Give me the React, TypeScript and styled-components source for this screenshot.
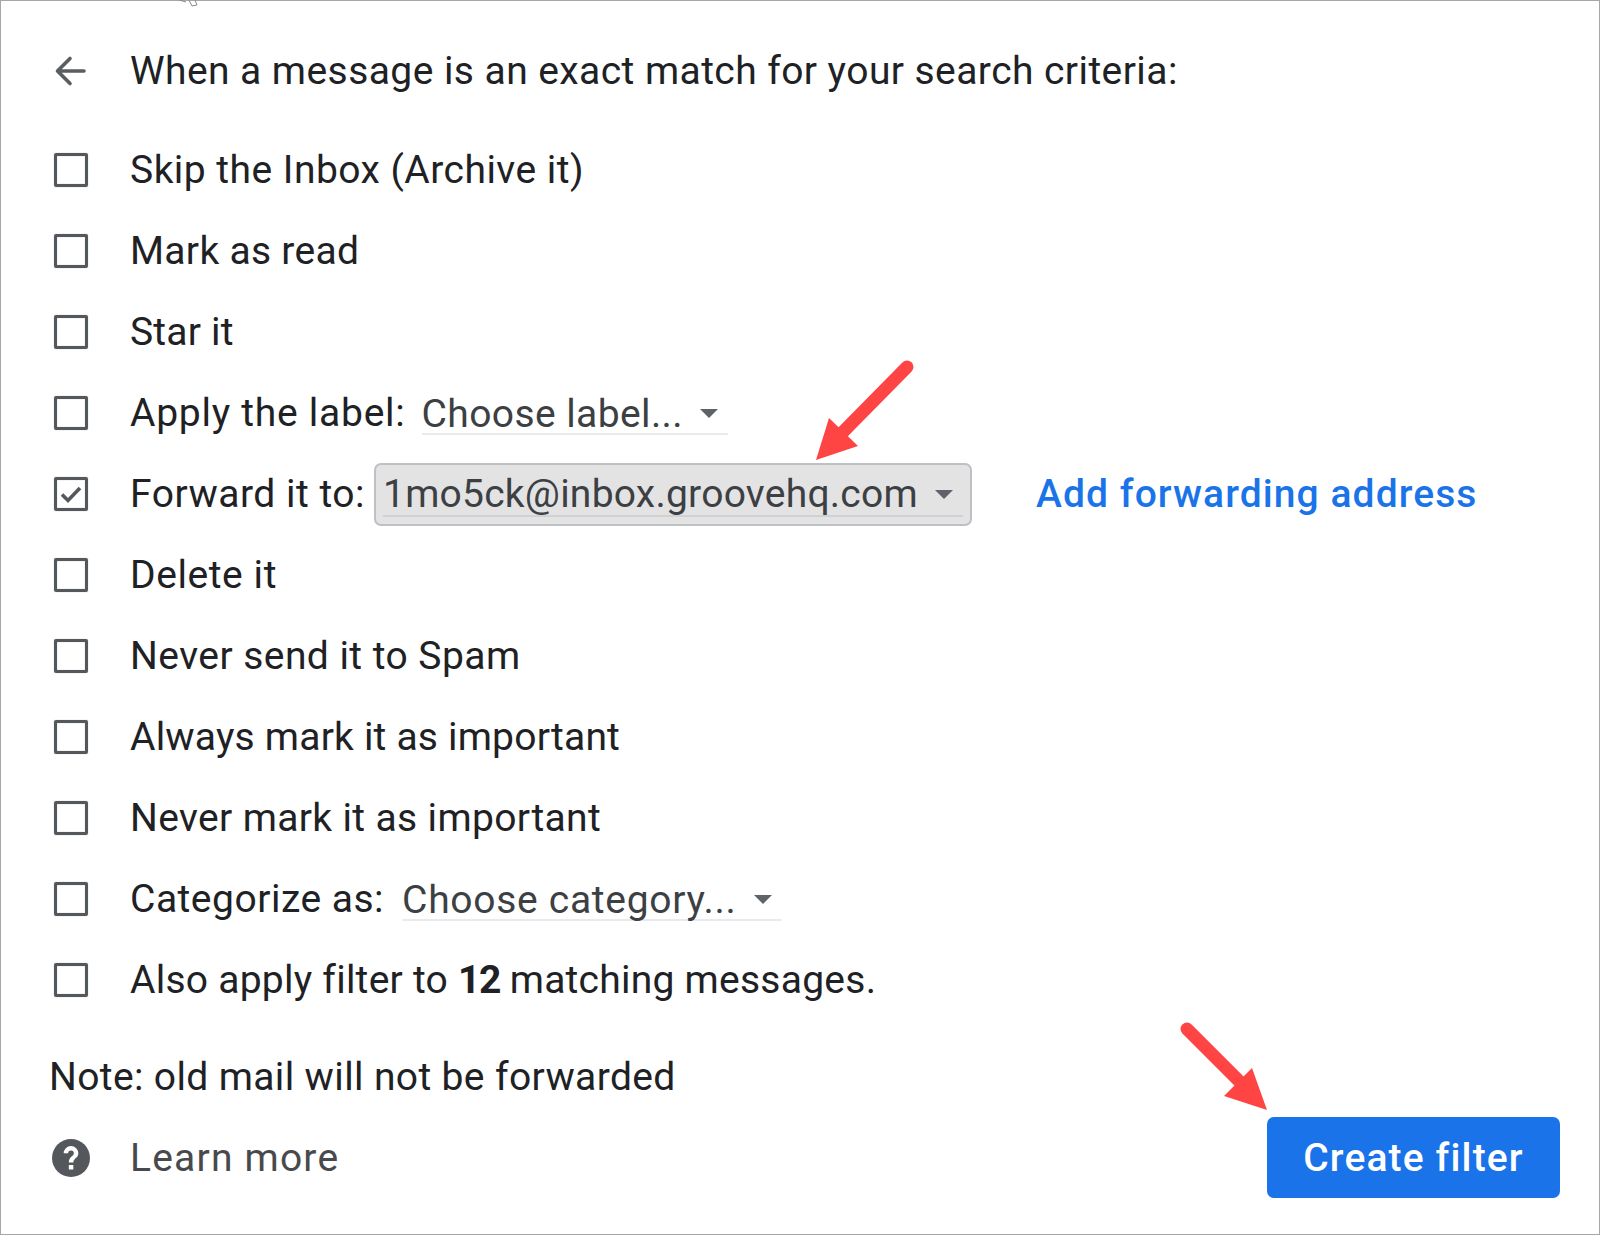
import React, { FC } from 'react';
import styled, { createGlobalStyle } from 'styled-components';

const GlobalStyle = createGlobalStyle`
  html, body { margin: 0; padding: 0; background: #fff; }
  body { font-family: Roboto, "Noto Sans", sans-serif; }
`;

const Frame = styled.div`
  position: relative;
  box-sizing: border-box;
  width: 1600px;
  height: 1235px;
  padding: 29px 39px 0 49px;
  border: 1px solid #a6a6a6;
  background: #fff;
  color: #202124;
  font-size: 39px;
`;

const Row = styled.div`
  display: flex;
  align-items: center;
  height: 81px;
  white-space: nowrap;
`;

const Header = styled(Row)`
  margin-bottom: 18px;
`;

const Rows = styled.div`
  display: flex;
  flex-direction: column;
  margin-bottom: 16px;
`;

const Text = styled.span<{ $track: number }>`
  letter-spacing: ${(p) => p.$track}px;

  b {
    letter-spacing: -1.5px;
  }
`;

const Note = styled(Text)`
  margin-left: -1px;
`;

const IconSlot = styled.div`
  display: flex;
  align-items: center;
  justify-content: center;
  flex: none;
  width: 42px;
  margin-right: 38px;
`;

const Box = styled.span`
  box-sizing: border-box;
  display: block;
  width: 34px;
  height: 34px;
  border: 3px solid #54575b;
  border-radius: 2px;
  box-shadow: 0 0 1px rgba(95, 99, 104, 0.7), inset 0 0 1px rgba(95, 99, 104, 0.7);
`;

const Caret = styled.span`
  flex: none;
  width: 0;
  height: 0;
  margin-top: -2px;
  border-left: 9px solid transparent;
  border-right: 9px solid transparent;
  border-top: 9px solid #5f6368;
`;

const Select = styled.span<{ $width: number; $gap: number }>`
  display: flex;
  align-items: center;
  justify-content: space-between;
  box-sizing: border-box;
  width: ${(p) => p.$width}px;
  height: 40px;
  margin-left: ${(p) => p.$gap}px;
  margin-top: 5px;
  border-bottom: 2px solid #e8eaed;
  padding-right: 10px;
  color: #3c4043;
`;

const BoxedSelect = styled.span`
  display: flex;
  align-items: center;
  box-sizing: border-box;
  width: 598px;
  height: 63px;
  margin-left: 9px;
  margin-top: 1px;
  padding: 0 7px;
  background: #e3e3e3;
  border: 2px solid #bdc1c6;
  border-radius: 7px;

  ${Select} {
    margin: 0;
    width: 100%;
    height: 46px;
    padding-top: 2px;
    border-bottom-color: #cfd1d4;
  }

  ${Caret} {
    margin-top: 0;
  }
`;

const ForwardLink = styled.a`
  margin-left: 64px;
  color: #1a73e8;
  font-weight: 500;
  letter-spacing: 1.08px;
`;

const Footer = styled(Row)`
  justify-content: space-between;
`;

const Learn = styled.div`
  display: flex;
  align-items: center;
  color: #48494c;
  letter-spacing: 1.2px;
`;

const CreateButton = styled.button`
  width: 293px;
  height: 81px;
  border: 0;
  border-radius: 7px;
  background: #1a73e8;
  color: #fff;
  font: 500 39px Roboto, sans-serif;
  letter-spacing: 1.14px;
`;

const Annotation = styled.svg`
  position: absolute;
  left: -1px;
  top: -1px;
  pointer-events: none;
`;

const BackArrow: FC = () => (
  <svg width="34" height="34" viewBox="0 0 34 34" fill="none" stroke="#5a5d61" strokeWidth="3.6" strokeLinecap="round" strokeLinejoin="round">
    <path d="M30 17H4M16 4.5 3.5 17 16 29.5" />
  </svg>
);

const HelpIcon: FC = () => (
  <svg width="40" height="40" viewBox="0 0 24 24">
    <circle cx="12" cy="12" r="11.4" fill="#54575b" />
    <path d="M7.6 9.2a4.4 4.4 0 0 1 8.8 0c0 2.9-3 3-3 5.5h-2.7c0-3.5 3-3.6 3-5.5a1.7 1.7 0 0 0-3.4 0z" fill="#fff" />
    <rect x="10.7" y="16.2" width="2.7" height="2.7" fill="#fff" />
  </svg>
);

const CheckBox: FC<{ checked?: boolean }> = ({ checked }) => (
  <Box>
    {checked && (
      <svg width="28" height="28" viewBox="0 0 28 28" fill="none" stroke="#54575b" strokeWidth="3.6" style={{ display: 'block' }}>
        <path d="M5 14.5l6 6L23 8" />
      </svg>
    )}
  </Box>
);

const options = [
  { text: 'Skip the Inbox (Archive it)', track: 0.47 },
  { text: 'Mark as read', track: 0.3 },
  { text: 'Star it', track: 0.2 },
];

const tailOptions = [
  { text: 'Delete it', track: 0.58 },
  { text: 'Never send it to Spam', track: 0.45 },
  { text: 'Always mark it as important', track: 0.2 },
  { text: 'Never mark it as important', track: 0.36 },
];

const Option: FC<{ checked?: boolean; children: React.ReactNode }> = ({ checked, children }) => (
  <Row>
    <IconSlot><CheckBox checked={checked} /></IconSlot>
    {children}
  </Row>
);

const App: FC = () => (
  <Frame>
    <GlobalStyle />
    <Header>
      <IconSlot><BackArrow /></IconSlot>
      <Text $track={0.43}>When a message is an exact match for your search criteria:</Text>
    </Header>
    <Rows>
      {options.map(({ text, track }) => <Option key={text}><Text $track={track}>{text}</Text></Option>)}
      <Option>
        <Text $track={0.74}>Apply the label:</Text>
        <Select $width={306} $gap={16}><Text $track={0.4}>Choose label...</Text><Caret /></Select>
      </Option>
      <Option checked>
        <Text $track={0.5}>Forward it to:</Text>
        <BoxedSelect>
          <Select $width={580} $gap={0}><Text $track={0.24}>1mo5ck@inbox.groovehq.com</Text><Caret /></Select>
        </BoxedSelect>
        <ForwardLink>Add forwarding address</ForwardLink>
      </Option>
      {tailOptions.map(({ text, track }) => <Option key={text}><Text $track={track}>{text}</Text></Option>)}
      <Option>
        <Text $track={0.5}>Categorize as:</Text>
        <Select $width={380} $gap={18}><Text $track={0.7}>Choose category...</Text><Caret /></Select>
      </Option>
      <Option>
        <Text $track={0.25}>Also apply filter to <b>12</b> matching messages.</Text>
      </Option>
    </Rows>
    <Row><Note $track={0.37}>Note: old mail will not be forwarded</Note></Row>
    <Footer>
      <Learn>
        <IconSlot><HelpIcon /></IconSlot>
        Learn more
      </Learn>
      <CreateButton>Create filter</CreateButton>
    </Footer>
    <Annotation width="1600" height="1235" viewBox="0 0 1600 1235">
      <path d="M907 367 840 435" stroke="#ff4444" strokeWidth="13" strokeLinecap="round" />
      <path d="M816 460 829 418 858 446Z" fill="#ff4444" />
      <path d="M1187 1029 1245 1087" stroke="#ff4444" strokeWidth="13" strokeLinecap="round" />
      <path d="M1267 1110 1252 1068 1224 1096Z" fill="#ff4444" />
      <path d="M179 0 186 2M189 0 192 6 197 5 195 0" fill="none" stroke="#8a8a8a" strokeWidth="1" />
    </Annotation>
  </Frame>
);

export default App;
